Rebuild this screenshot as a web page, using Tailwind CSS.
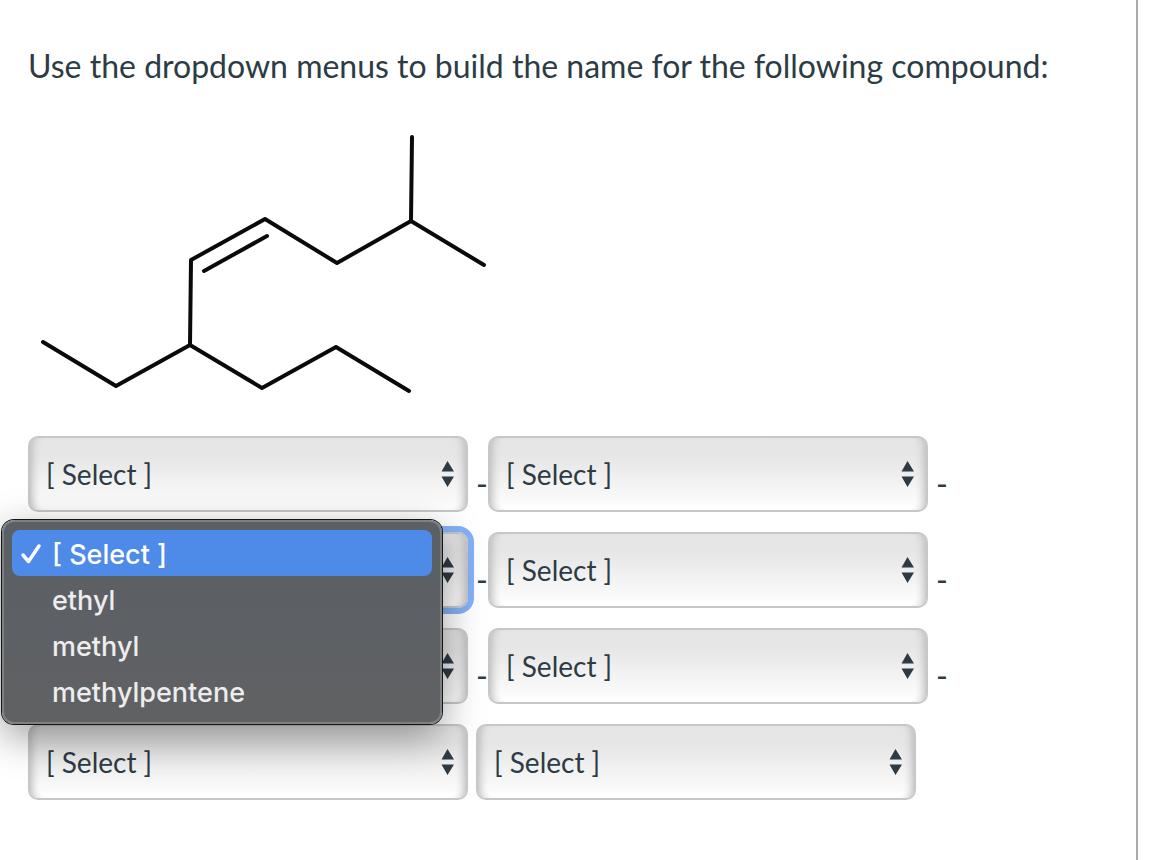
<!DOCTYPE html>
<html lang="en">
  <head>
    <meta charset="UTF-8" />
    <meta name="viewport" content="width=device-width, initial-scale=1.0" />
    <title>Name the compound</title>
    <script src="https://cdn.jsdelivr.net/npm/@tailwindcss/browser@4"></script>
  </head>

  <body class="bg-white font-[Lato,sans-serif] text-[32px] text-[#2d3b45]">
    <main class="mr-4 min-h-screen border-r-2 border-[#aaaaaa] px-7 pt-11 pb-8">
      <h1 class="leading-11">
        Use the dropdown menus to build the name for the following compound:
      </h1>

      <!-- Skeletal structure -->
      <svg
        class="my-8 h-71 w-120"
        viewBox="28 120 480 284"
        fill="none"
        stroke="#0a0a0a"
        stroke-width="4"
        stroke-linecap="round"
        stroke-linejoin="round"
        role="img"
        aria-label="Skeletal structure of the compound"
      >
        <path d="M43 342L116 386L190 345L262 388L336 347L409 391" />
        <path d="M190 345L191 260L265 219L337 263L411 221L484 265" />
        <path d="M411 221L412 137" />
        <path d="M204 271L267 236" />
      </svg>

      <!-- Name parts -->
      <div class="flex flex-col gap-5">
        <div class="flex">
          <div class="relative w-110">
            <select
              aria-label="Part 1"
              class="h-19 w-full appearance-none rounded-[10px] border-2 border-[#c7c7c7] bg-linear-to-b from-[#e6e6e6] from-25% to-white px-4 text-[28px] shadow-[inset_10px_0_8px_-8px_#b8b8b8,inset_-10px_0_8px_-8px_#b8b8b8]"
            >
              <option>[ Select ]</option>
            </select>
            <svg class="pointer-events-none absolute top-6 right-3 h-7 w-4" viewBox="0 0 16 28" fill="#2d3b45">
              <path d="M7.500 1L14 11.500H1.500zM7.500 27L1.500 16.500H14z" />
            </svg>
          </div>
          <span class="w-5 pt-6 text-right leading-12">-</span>
          <div class="relative w-110">
            <select
              aria-label="Part 2"
              class="h-19 w-full appearance-none rounded-[10px] border-2 border-[#c7c7c7] bg-linear-to-b from-[#e6e6e6] from-25% to-white px-4 text-[28px] shadow-[inset_10px_0_8px_-8px_#b8b8b8,inset_-10px_0_8px_-8px_#b8b8b8]"
            >
              <option>[ Select ]</option>
            </select>
            <svg class="pointer-events-none absolute top-6 right-3 h-7 w-4" viewBox="0 0 16 28" fill="#2d3b45">
              <path d="M7.500 1L14 11.500H1.500zM7.500 27L1.500 16.500H14z" />
            </svg>
          </div>
          <span class="w-5 pt-6 text-right leading-12">-</span>
        </div>

        <div class="flex">
          <div class="relative w-110">
            <select
              id="part3"
              aria-label="Part 3"
              class="h-19 w-full appearance-none rounded-[10px] border-2 border-[#c7c7c7] bg-linear-to-b from-[#e6e6e6] from-25% to-white px-4 text-[28px] shadow-[inset_10px_0_8px_-8px_#b8b8b8,inset_-10px_0_8px_-8px_#b8b8b8] ring-6 ring-[#84b1f7]"
            >
              <option>[ Select ]</option>
              <option>ethyl</option>
              <option>methyl</option>
              <option>methylpentene</option>
            </select>
            <svg class="pointer-events-none absolute top-6 right-3 h-7 w-4" viewBox="0 0 16 28" fill="#2d3b45">
              <path d="M7.500 1L14 11.500H1.500zM7.500 27L1.500 16.500H14z" />
            </svg>

            <!-- Open menu -->
            <ul
              id="menu"
              role="listbox"
              aria-label="Part 3 options"
              class="absolute -top-3 -left-6.5 z-10 w-110 rounded-xl border-2 border-[#7d8182] bg-linear-to-b from-[#5a6066] to-[#606163] px-2 py-2 font-[Inter,sans-serif] text-[27px] leading-[43px] font-medium text-[#ededed] shadow-[0_0_0_1px_#151515,0_12px_40px_rgba(0,0,0,0.4)]"
            >
              <li role="option" aria-selected="true" class="flex items-center rounded-lg bg-[#4e8ae8] pt-[3px] text-white">
                <svg class="mr-2 ml-2 h-6 w-6" viewBox="0 0 24 24" fill="none" stroke="currentColor" stroke-width="3.500" stroke-linecap="round" stroke-linejoin="round">
                  <path d="M3 12L8.500 18.500L19 3" />
                </svg>
                [ Select ]
              </li>
              <li role="option" aria-selected="false" class="pt-[3px] pl-10">ethyl</li>
              <li role="option" aria-selected="false" class="pt-[3px] pl-10">methyl</li>
              <li role="option" aria-selected="false" class="pt-[3px] pl-10">methylpentene</li>
            </ul>
          </div>
          <span class="w-5 pt-6 text-right leading-12">-</span>
          <div class="relative w-110">
            <select
              aria-label="Part 4"
              class="h-19 w-full appearance-none rounded-[10px] border-2 border-[#c7c7c7] bg-linear-to-b from-[#e6e6e6] from-25% to-white px-4 text-[28px] shadow-[inset_10px_0_8px_-8px_#b8b8b8,inset_-10px_0_8px_-8px_#b8b8b8]"
            >
              <option>[ Select ]</option>
            </select>
            <svg class="pointer-events-none absolute top-6 right-3 h-7 w-4" viewBox="0 0 16 28" fill="#2d3b45">
              <path d="M7.500 1L14 11.500H1.500zM7.500 27L1.500 16.500H14z" />
            </svg>
          </div>
          <span class="w-5 pt-6 text-right leading-12">-</span>
        </div>

        <div class="flex">
          <div class="relative w-110">
            <select
              aria-label="Part 5"
              class="h-19 w-full appearance-none rounded-[10px] border-2 border-[#c7c7c7] bg-linear-to-b from-[#e6e6e6] from-25% to-white px-4 text-[28px] shadow-[inset_10px_0_8px_-8px_#b8b8b8,inset_-10px_0_8px_-8px_#b8b8b8]"
            >
              <option>[ Select ]</option>
            </select>
            <svg class="pointer-events-none absolute top-6 right-3 h-7 w-4" viewBox="0 0 16 28" fill="#2d3b45">
              <path d="M7.500 1L14 11.500H1.500zM7.500 27L1.500 16.500H14z" />
            </svg>
          </div>
          <span class="w-5 pt-6 text-right leading-12">-</span>
          <div class="relative w-110">
            <select
              aria-label="Part 6"
              class="h-19 w-full appearance-none rounded-[10px] border-2 border-[#c7c7c7] bg-linear-to-b from-[#e6e6e6] from-25% to-white px-4 text-[28px] shadow-[inset_10px_0_8px_-8px_#b8b8b8,inset_-10px_0_8px_-8px_#b8b8b8]"
            >
              <option>[ Select ]</option>
            </select>
            <svg class="pointer-events-none absolute top-6 right-3 h-7 w-4" viewBox="0 0 16 28" fill="#2d3b45">
              <path d="M7.500 1L14 11.500H1.500zM7.500 27L1.500 16.500H14z" />
            </svg>
          </div>
          <span class="w-5 pt-6 text-right leading-12">-</span>
        </div>

        <div class="flex gap-2">
          <div class="relative w-110">
            <select
              aria-label="Part 7"
              class="h-19 w-full appearance-none rounded-[10px] border-2 border-[#c7c7c7] bg-linear-to-b from-[#e6e6e6] from-25% to-white px-4 text-[28px] shadow-[inset_10px_0_8px_-8px_#b8b8b8,inset_-10px_0_8px_-8px_#b8b8b8]"
            >
              <option>[ Select ]</option>
            </select>
            <svg class="pointer-events-none absolute top-6 right-3 h-7 w-4" viewBox="0 0 16 28" fill="#2d3b45">
              <path d="M7.500 1L14 11.500H1.500zM7.500 27L1.500 16.500H14z" />
            </svg>
          </div>
          <div class="relative w-110">
            <select
              aria-label="Part 8"
              class="h-19 w-full appearance-none rounded-[10px] border-2 border-[#c7c7c7] bg-linear-to-b from-[#e6e6e6] from-25% to-white px-4 text-[28px] shadow-[inset_10px_0_8px_-8px_#b8b8b8,inset_-10px_0_8px_-8px_#b8b8b8]"
            >
              <option>[ Select ]</option>
            </select>
            <svg class="pointer-events-none absolute top-6 right-3 h-7 w-4" viewBox="0 0 16 28" fill="#2d3b45">
              <path d="M7.500 1L14 11.500H1.500zM7.500 27L1.500 16.500H14z" />
            </svg>
          </div>
        </div>
      </div>
    </main>

    <script>
      const options = document.querySelectorAll("#menu li");

      // Pick an option and close the menu
      options.forEach((option, index) => {
        option.addEventListener("click", () => {
          document.getElementById("part3").selectedIndex = index;
          document.getElementById("menu").hidden = true;
        });
      });
    </script>
  </body>
</html>
